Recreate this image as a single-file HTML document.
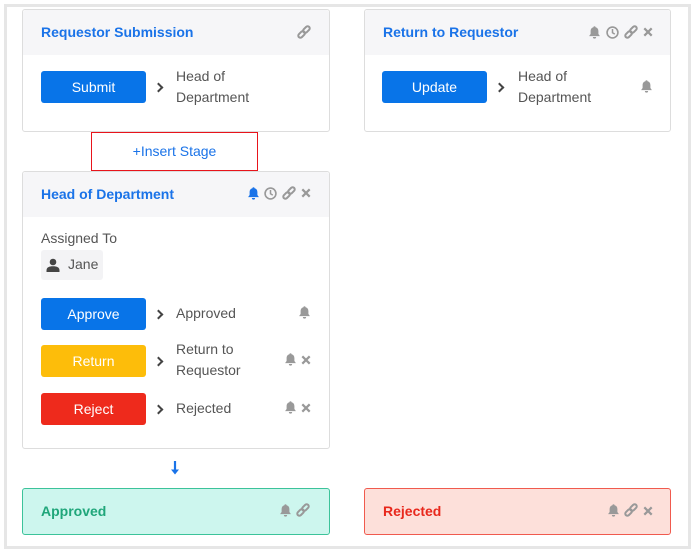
<!DOCTYPE html>
<html><head><meta charset="utf-8">
<style>
*{box-sizing:border-box;margin:0;padding:0}
body{width:695px;height:552px;background:#fff;font-family:"Liberation Sans",sans-serif;position:relative;overflow:hidden;color:#555}
.abs{position:absolute}
.frame{left:4px;top:4px;width:687px;height:545px;border:3px solid #e6e6e6}
.card{border:1px solid #ddd;border-radius:3px;background:#fff}
.hdr{position:absolute;left:0;top:0;right:0;height:45px;background:#f6f6f8;border-radius:3px 3px 0 0}
.title{position:absolute;left:18px;top:14px;font-weight:bold;font-size:14px;color:#1a73e8}
.btn{position:absolute;width:105px;height:32px;border-radius:3px;color:#fff;font-size:14px;text-align:center;line-height:32px}
.blue{background:#0874e8}.yel{background:#fdbd0a}.red{background:#ee2a1c}
.t{position:absolute;font-size:14px;color:#555;line-height:21px}
.chev{position:absolute;width:7px;height:7px;border-right:2px solid #444;border-top:2px solid #444;transform:rotate(45deg)}
svg{position:absolute}
.g{color:#999;fill:#999}
</style></head><body>
<div class="abs frame"></div>

<div class="abs card" style="left:22px;top:9px;width:308px;height:123px">
  <div class="hdr"></div>
  <div class="title">Requestor Submission</div>
</div>
<div class="btn blue" style="left:41px;top:71px">Submit</div>
<div class="chev" style="left:155px;top:84px"></div>
<div class="t" style="left:176px;top:66px">Head of<br>Department</div>

<div class="abs card" style="left:364px;top:9px;width:307px;height:123px">
  <div class="hdr"></div>
  <div class="title">Return to Requestor</div>
</div>
<div class="btn blue" style="left:382px;top:71px">Update</div>
<div class="chev" style="left:496px;top:84px"></div>
<div class="t" style="left:518px;top:66px">Head of<br>Department</div>

<div class="abs" style="left:91px;top:132px;width:167px;height:39px;border:1px solid #e8141b;color:#1a73e8;font-size:14px;text-align:center;line-height:37px">+Insert Stage</div>

<div class="abs card" style="left:22px;top:171px;width:308px;height:278px">
  <div class="hdr"></div>
  <div class="title">Head of Department</div>
</div>
<div class="t" style="left:41px;top:228px">Assigned To</div>
<div class="abs" style="left:41px;top:250px;width:62px;height:30px;background:#f3f3f5;border-radius:3px"></div>
<svg style="left:46px;top:258px" width="14" height="14" viewBox="0 0 14 14"><circle cx="7" cy="4" r="3.3" fill="#444"/><path d="M0.5 14v-1.5C0.5 9.5 3 8.3 7 8.3s6.5 1.2 6.5 4.2V14z" fill="#444"/></svg>
<div class="t" style="left:68px;top:254px">Jane</div>

<div class="btn blue" style="left:41px;top:298px">Approve</div>
<div class="chev" style="left:155px;top:311px"></div>
<div class="t" style="left:176px;top:303px">Approved</div>

<div class="btn yel" style="left:41px;top:345px">Return</div>
<div class="chev" style="left:155px;top:358px"></div>
<div class="t" style="left:176px;top:339px">Return to<br>Requestor</div>

<div class="btn red" style="left:41px;top:393px">Reject</div>
<div class="chev" style="left:155px;top:406px"></div>
<div class="t" style="left:176px;top:398px">Rejected</div>

<svg style="left:169px;top:460px" width="12" height="16" viewBox="0 0 12 16"><path d="M6 1v12" stroke="#1a73e8" stroke-width="2.2"/><path d="M2 9.5L6 14.5L10 9.5z" fill="#1a73e8"/></svg>

<div class="abs" style="left:22px;top:488px;width:308px;height:47px;background:#cdf6ee;border:1.5px solid #3cc39a;border-radius:3px"></div>
<div class="abs" style="left:41px;top:503px;font-weight:bold;font-size:14px;color:#1fa67a">Approved</div>

<div class="abs" style="left:364px;top:488px;width:307px;height:47px;background:#fde0da;border:1.5px solid #f05a4e;border-radius:3px"></div>
<div class="abs" style="left:383px;top:503px;font-weight:bold;font-size:14px;color:#e8281c">Rejected</div>

<svg width="0" height="0" style="position:absolute">
 <defs>
  <symbol id="bell" viewBox="0 0 12 12"><path d="M6 0.2c-0.6 0-1 0.4-1 1C3.3 1.6 2.4 3 2.4 4.8v2.6L1 9.4h10L9.6 7.4V4.8C9.6 3 8.7 1.6 7 1.2c0-0.6-0.4-1-1-1zM4.5 10.2h3A1.5 1.5 0 0 1 4.5 10.2z"/></symbol>
  <symbol id="clock" viewBox="0 0 12 12"><circle cx="6" cy="6" r="5" fill="none" stroke="currentColor" stroke-width="1.5"/><path d="M6 2.8v3.4l2.1 1.3" fill="none" stroke="currentColor" stroke-width="1.4"/></symbol>
  <symbol id="link" viewBox="0 0 12 12"><g fill="none" stroke="currentColor" stroke-width="1.7" transform="rotate(-45 6 6)"><rect x="-0.2" y="4.2" width="6.6" height="3.6" rx="1.8"/><rect x="5.6" y="4.2" width="6.6" height="3.6" rx="1.8"/></g></symbol>
  <symbol id="x" viewBox="0 0 12 12"><path d="M2.3 2.3l7.4 7.4M9.7 2.3l-7.4 7.4" stroke="currentColor" stroke-width="2.2"/></symbol>
 </defs>
</svg>
<svg class="g" style="left:297px;top:25px" width="14" height="14"><use href="#link"/></svg>

<svg class="g" style="left:588px;top:26px" width="13" height="13"><use href="#bell"/></svg>
<svg class="g" style="left:606px;top:26px" width="13" height="13"><use href="#clock"/></svg>
<svg class="g" style="left:624px;top:25px" width="14" height="14"><use href="#link"/></svg>
<svg class="g" style="left:642px;top:26px" width="12" height="12"><use href="#x"/></svg>
<svg class="g" style="left:640px;top:80px" width="13" height="13"><use href="#bell"/></svg>

<svg style="left:247px;top:187px;color:#1a73e8;fill:#1a73e8" width="13" height="13"><use href="#bell"/></svg>
<svg class="g" style="left:264px;top:187px" width="13" height="13"><use href="#clock"/></svg>
<svg class="g" style="left:282px;top:186px" width="14" height="14"><use href="#link"/></svg>
<svg class="g" style="left:300px;top:187px" width="12" height="12"><use href="#x"/></svg>

<svg class="g" style="left:298px;top:306px" width="13" height="13"><use href="#bell"/></svg>
<svg class="g" style="left:284px;top:353px" width="13" height="13"><use href="#bell"/></svg>
<svg class="g" style="left:300px;top:354px" width="12" height="12"><use href="#x"/></svg>
<svg class="g" style="left:284px;top:401px" width="13" height="13"><use href="#bell"/></svg>
<svg class="g" style="left:300px;top:402px" width="12" height="12"><use href="#x"/></svg>

<svg class="g" style="left:279px;top:504px" width="13" height="13"><use href="#bell"/></svg>
<svg class="g" style="left:296px;top:503px" width="14" height="14"><use href="#link"/></svg>

<svg class="g" style="left:607px;top:504px" width="13" height="13"><use href="#bell"/></svg>
<svg class="g" style="left:624px;top:503px" width="14" height="14"><use href="#link"/></svg>
<svg class="g" style="left:642px;top:505px" width="12" height="12"><use href="#x"/></svg>
</body></html>
